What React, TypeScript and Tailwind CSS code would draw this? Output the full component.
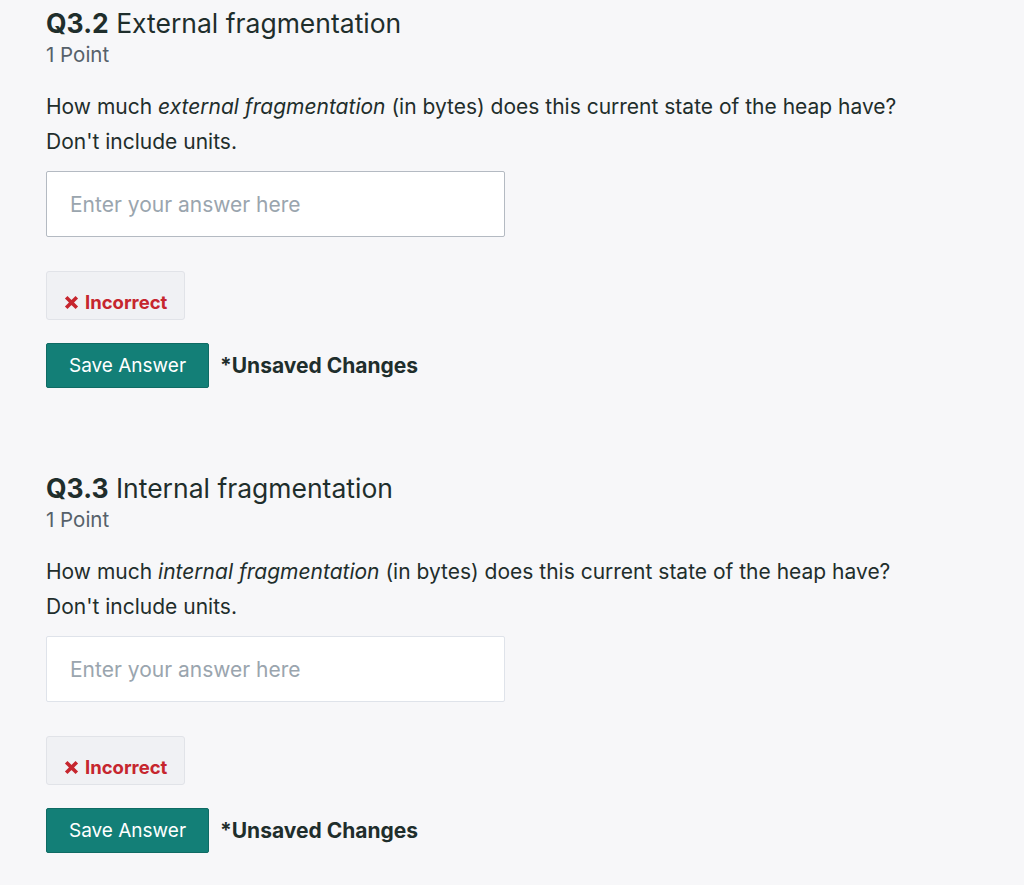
import React from "react";

function XIcon() {
  return (
    <svg width="15" height="15" viewBox="0 0 15 15" className="mr-[6px] shrink-0">
      <path d="M2.2 2.2 L12.8 12.8 M12.8 2.2 L2.2 12.8" stroke="#c6262e" strokeWidth="3.6" strokeLinecap="butt" />
    </svg>
  );
}

function Question({
  num,
  title,
  em,
  focused,
}: {
  num: string;
  title: string;
  em: string;
  focused: boolean;
}) {
  return (
    <section className="flex flex-col items-start">
      <h2 className="text-[26.5px] leading-[30px] text-[#1f2e2c] mt-[8px] whitespace-nowrap">
        <span className="font-bold">{num}</span> {title}
      </h2>
      <div className="text-[20.5px] leading-[24px] text-[#56616a] mt-[5px]">1 Point</div>
      <p className="text-[21px] leading-[34.5px] text-[#1f2e2c] mt-[23px] whitespace-nowrap">
        How much <em>{em}</em> (in bytes) does this current state of the heap have?
        <br />
        Don't include units.
      </p>
      <input
        className={`mt-[12px] w-[459px] h-[66px] bg-white border rounded-[2px] pl-[23px] text-[21px] outline-none placeholder:text-[#9aa5ae] ${
          focused ? "border-[#b4bac2]" : "border-[#dfe3ea]"
        }`}
        placeholder="Enter your answer here"
      />
      <div className="mt-[34px] w-[139px] h-[49px] bg-[#f0f1f4] border border-[#e1e3e8] rounded-[3px] flex items-center pl-[17px] pt-[14px]">
        <XIcon />
        <span className="text-[18.5px] font-bold text-[#c6262e]">Incorrect</span>
      </div>
      <div className="mt-[23px] flex items-center">
        <button className="w-[163px] h-[45px] bg-[#137f77] border border-[#0f6b64] rounded-[2px] text-white text-[19px] pt-[1px]">
          Save Answer
        </button>
        <span className="ml-[11px] text-[21px] font-bold text-[#1f2e2c]">*Unsaved Changes</span>
      </div>
    </section>
  );
}

export default function App() {
  return (
    <div
      className="w-[1024px] h-[885px] bg-[#f7f7f9] pl-[46px] overflow-hidden"
      style={{ fontFamily: "Inter, 'Open Sans', sans-serif" }}
    >
      <Question num="Q3.2" title="External fragmentation" em="external fragmentation" focused={true} />
      <div className="h-[77px]" />
      <Question num="Q3.3" title="Internal fragmentation" em="internal fragmentation" focused={false} />
    </div>
  );
}
